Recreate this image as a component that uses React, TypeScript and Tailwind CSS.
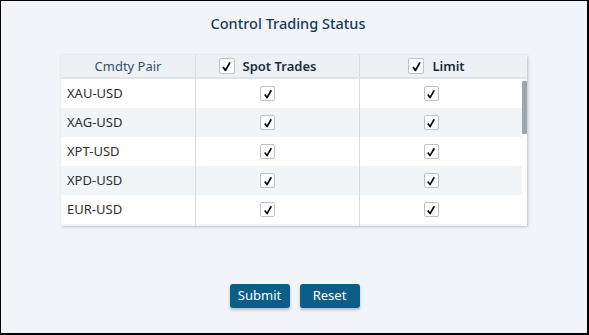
import { useState } from "react";

const pairs = ["XAU-USD", "XAG-USD", "XPT-USD", "XPD-USD", "EUR-USD", "GBP-USD"];

function Check({ big = false }: { big?: boolean }) {
  return (
    <span
      className={`flex items-center justify-center rounded-[2px] border border-[#bcc3ca] bg-white ${
        big ? "h-[16px] w-[16px]" : "h-[15px] w-[15px]"
      }`}
    >
      <svg viewBox="0 0 14 14" className={big ? "h-[13px] w-[13px]" : "h-[12px] w-[12px]"}>
        <path d="M3.2 7.6 L5.9 11.2 L10.8 2.6" fill="none" stroke="#000" strokeWidth="1.9" strokeLinejoin="round" />
      </svg>
    </span>
  );
}

export default function App() {
  const [rows] = useState(pairs);

  return (
    <div className="h-[335px] w-[589px] overflow-hidden border border-r-2 border-b-2 border-black bg-[#f1f5f9] font-['Noto_Sans','Open_Sans',sans-serif]">
      {/* Title */}
      <div className="flex justify-center pt-3 pr-[12px]">
        <h1 className="text-[14.5px] leading-5 font-medium text-[#163a58]">Control Trading Status</h1>
      </div>

      {/* Table */}
      <div className="mx-auto mt-[22px] w-[466px] bg-white shadow-[1px_1px_3px_rgba(0,0,0,0.22)]">
        <div className="flex h-[24px] border-b-2 border-[#dfe4e9] bg-[#edf1f4] text-[13px] leading-[22px]">
          <div className="flex w-[135px] items-center justify-center border-r border-[#d6dce2] text-[#34526c]">
            Cmdty Pair
          </div>
          <div className="flex w-[164px] items-center justify-center gap-2 border-r border-[#d6dce2] pr-5 font-semibold text-[#1d2c3a]">
            <Check big />
            Spot Trades
          </div>
          <div className="flex flex-1 items-center justify-center gap-2 pr-[14px] font-semibold text-[#1d2c3a]">
            <Check big />
            Limit
          </div>
        </div>

        <div className="flex h-[147px] overflow-hidden">
          <div className="flex-1">
            {rows.map((p, i) => (
              <div
                key={p}
                className={`flex h-[29px] text-[13px] text-[#2e2e2e] ${i % 2 === 1 ? "bg-[#f1f5f8]" : "bg-white"}`}
              >
                <div className="flex w-[135px] items-center border-r border-[#d6dce2] pl-[6px]">
                  {i < 5 ? p : ""}
                </div>
                <div className="flex w-[164px] items-center justify-center border-r border-[#d6dce2] pr-5">
                  {i < 5 && <Check />}
                </div>
                <div className="flex flex-1 items-center justify-center pr-5">{i < 5 && <Check />}</div>
              </div>
            ))}
          </div>
          <div className="w-[5px] bg-white pt-[2px]">
            <div className="h-[53px] w-[5px] rounded-[1px] bg-[#9ba6ae]" />
          </div>
        </div>
      </div>

      {/* Actions */}
      <div className="mt-[58px] flex justify-center gap-[10px] pl-[1px]">
        <button className="h-[24px] w-[60px] rounded-[3px] bg-[#0b5e87] text-[13px] text-white shadow-[0_2px_3px_rgba(0,0,0,0.25)]">
          Submit
        </button>
        <button className="h-[24px] w-[60px] rounded-[3px] bg-[#0b5e87] text-[13px] text-white shadow-[0_2px_3px_rgba(0,0,0,0.25)]">
          Reset
        </button>
      </div>
    </div>
  );
}
